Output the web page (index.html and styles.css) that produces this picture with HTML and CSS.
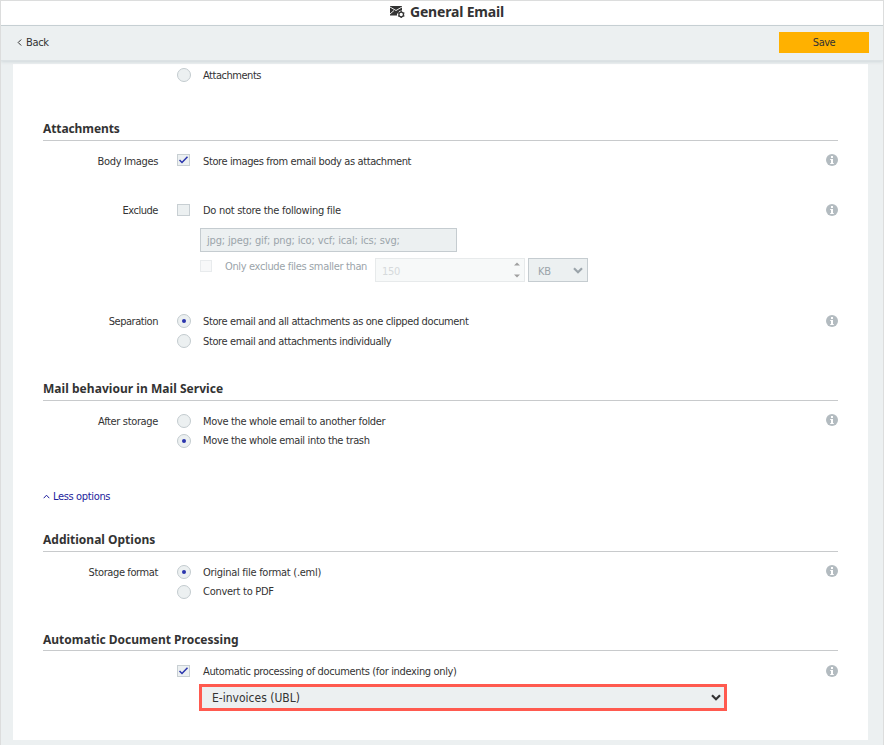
FILE: index.html
```html
<!DOCTYPE html>
<html lang="en">
<head>
<meta charset="utf-8">
<title>General Email</title>
<link rel="stylesheet" href="styles.css">
</head>
<body>
<svg width="0" height="0" class="defs" aria-hidden="true">
  <symbol id="info" viewBox="0 0 12 12"><circle cx="6" cy="6" r="6" fill="#b3bbc0"/><path d="M5 2h2v2H5zM4.200 5H7v4h.8v1H4.200V9H5V6h-.8z" fill="#fff"/></symbol>
  <symbol id="down" viewBox="0 0 10 7"><path d="M1 1.200l4 4 4-4" fill="none" stroke="currentColor" stroke-width="2.200"/></symbol>
</svg>
<div class="window">
  <header class="title">
    <svg width="16" height="14" viewBox="0 0 16 14"><path d="M0 0h12v4.600L9.500 5 7 8v1.500H0z" fill="#333"/><path d="M0 1l6 3.500L12 1M0 8l4-3.500" fill="none" stroke="#fff" stroke-width=".9"/><circle cx="11.200" cy="8.500" r="2.300" fill="#fff" stroke="#333" stroke-width="1.300"/><path d="M11.200 5v1M11.200 11v1M8 6.700l1 .6M13.400 9.700l1 .6M8 10.300l1-.6M13.400 7.300l1-.6" stroke="#333" stroke-width="1.300"/></svg>
    <h1>General Email</h1>
  </header>
  <nav class="toolbar">
    <a class="back"><svg width="5" height="7" viewBox="0 0 5 7"><path d="M4.200.5l-3 3 3 3" fill="none" stroke="#333"/></svg><span>Back</span></a>
    <button class="save">Save</button>
  </nav>
  <main class="card">
    <div class="row first"><i class="radio"></i><span class="text t1">Attachments</span></div>

    <h2 class="h-a"><span>Attachments</span></h2>
    <div class="row r-body"><span class="label">Body Images</span><i class="check on"><svg viewBox="0 0 11 10"><path d="M1.500 5l2.500 2.500L9.500 1.700" /></svg></i><span class="text t2">Store images from email body as attachment</span><svg class="info"><use href="#info"/></svg></div>
    <div class="row r-excl"><span class="label">Exclude</span><i class="check"></i><span class="text t3">Do not store the following file</span><svg class="info"><use href="#info"/></svg></div>
    <div class="field types"><span>jpg; jpeg; gif; png; ico; vcf; ical; ics; svg;</span></div>
    <div class="limit">
      <i class="check faded"></i><span class="only">Only exclude files smaller than</span>
      <div class="field number"><span>150</span><svg width="6" height="16" viewBox="0 0 6 16"><path d="M0 3.500L3 .5l3 3zM0 12.500l3 3 3-3z" fill="#a0a0a0"/></svg></div>
      <div class="field unit"><span>KB</span><svg width="10" height="7"><use href="#down"/></svg></div>
    </div>
    <div class="row r-sep"><span class="label">Separation</span><i class="radio on"></i><span class="text t4">Store email and all attachments as one clipped document</span><svg class="info"><use href="#info"/></svg></div>
    <div class="row"><i class="radio"></i><span class="text t5">Store email and attachments individually</span></div>

    <h2 class="h-b"><span>Mail behaviour in Mail Service</span></h2>
    <div class="row r-after"><span class="label">After storage</span><i class="radio"></i><span class="text t6">Move the whole email to another folder</span><svg class="info"><use href="#info"/></svg></div>
    <div class="row tight"><i class="radio on"></i><span class="text t7">Move the whole email into the trash</span></div>

    <a class="less"><svg width="7" height="5" viewBox="0 0 7 5"><path d="M.7 4.200l2.800-3 2.800 3" fill="none" stroke="#1d1d9c"/></svg><span>Less options</span></a>

    <h2 class="h-c"><span>Additional Options</span></h2>
    <div class="row r-format"><span class="label">Storage format</span><i class="radio on"></i><span class="text t8">Original file format (.eml)</span><svg class="info"><use href="#info"/></svg></div>
    <div class="row tight"><i class="radio"></i><span class="text t9">Convert to PDF</span></div>

    <h2 class="h-d"><span>Automatic Document Processing</span></h2>
    <div class="row r-auto"><i class="check on"><svg viewBox="0 0 11 10"><path d="M1.500 5l2.500 2.500L9.500 1.700" /></svg></i><span class="text t10">Automatic processing of documents (for indexing only)</span><svg class="info"><use href="#info"/></svg></div>
    <div class="select"><span>E-invoices (UBL)</span><svg width="10" height="7"><use href="#down"/></svg></div>
  </main>
</div>
</body>
</html>
```
FILE: styles.css
```css
* { box-sizing: border-box; }
body { margin: 0; background: #ecf0f1; color: #333; font-family: "DejaVu Sans Condensed", "DejaVu Sans", sans-serif; font-stretch: condensed; font-size: 11px; line-height: 14px; letter-spacing: -.35px; }
.defs { position: absolute; }
.window { height: 745px; overflow: hidden; border: 1px solid #dcdddd; border-bottom: 0; }
.title { display: flex; justify-content: center; height: 25px; background: #fff; border-bottom: 1px solid #c5ced2; padding: 2px 0 0 10px; gap: 4px; }
.title svg { margin-top: 3px; }
h1 { margin: 0; font: bold 14px/17px "Noto Sans", sans-serif; letter-spacing: -.18px; }
.toolbar { display: flex; justify-content: space-between; height: 35px; padding: 6px 14px 0 16px; border-bottom: 1px solid #dce2e4; box-shadow: 0 1px 3px #cfd7da; position: relative; }
.back { display: flex; align-items: center; height: 21px; gap: 4px; }
.save { width: 90px; height: 21px; padding: 0; border: 0; background: #ffb100; color: #333; font: inherit; letter-spacing: -.5px; }
.card { width: 855px; height: 676px; margin: 3px 0 0 12px; padding: 1px 30px 0; background: #fff; }
.row { display: grid; grid-template-columns: 115px 14px 1fr 12px; column-gap: 19px; align-items: center; height: 20px; }
.row.tight { height: 19px; }
.label { grid-column: 1; text-align: right; padding-top: 2px; }
.row .radio, .row .check { grid-column: 2; }
.text { grid-column: 3; margin-left: -7px; padding-top: 2px; white-space: nowrap; }
.tight .text { padding-top: 0; }
.r-body .label, .r-body .text { padding-top: 3px; }
.info { grid-column: 4; width: 12px; height: 12px; }
.r-after .info, .r-format .info { margin-bottom: 2px; }
.t1 { letter-spacing: -.47px; }
.t2, .t4, .t5 { letter-spacing: -.39px; }
.t3, .t8, .t9 { letter-spacing: -.28px; }
.r-excl .label, .r-sep .label { letter-spacing: -.45px; }
.r-format .label { letter-spacing: -.39px; }
.radio { display: grid; place-items: center; width: 14px; height: 14px; border: 1px solid #c3cbcf; border-radius: 50%; background: #ecf0f1; }
.radio.on::after { content: ""; width: 4px; height: 4px; border-radius: 50%; background: #2b35ad; }
.check { display: block; width: 13px; height: 12px; border: 1px solid #c8cfd3; background: #ecf0f1; }
.check svg { display: block; width: 11px; height: 10px; fill: none; stroke: #2b35ad; stroke-width: 1.500; }
.check.faded { opacity: .4; }
h2 { margin: 0; height: 20px; border-bottom: 1px solid #c8cacc; font: bold 12px/15px "Noto Sans", sans-serif; letter-spacing: 0; }
.h-a { margin-top: 36px; letter-spacing: -.1px; }
.r-body { margin-top: 9px; }
.r-excl { margin-top: 30px; }
.field { display: flex; align-items: center; height: 24px; border: 1px solid #c5ccd0; background: #ecf0f1; color: #9ba4aa; }
.field span { padding-top: 2px; }
.types { width: 257px; margin: 8px 0 0 157px; padding-left: 6px; letter-spacing: -.155px; }
.limit { display: flex; margin: 6px 0 0 157px; height: 24px; }
.limit .check { width: 12px; margin-top: 2px; }
.only { width: 150px; margin: 2px 0 0 13px; white-space: nowrap; color: #9ba4aa; }
.number { width: 150px; justify-content: space-between; padding: 0 4px 0 6px; background: #f7f9f9; border-color: #e7eaeb; color: #d6dadc; }
.limit .field span { padding-top: 4px; }
.unit { width: 60px; margin-left: 3px; justify-content: space-between; padding: 0 4px 0 9px; }
.r-sep { margin-top: 29px; }
.h-b { margin-top: 30px; letter-spacing: .04px; }
.r-after { margin-top: 10px; }
.less { display: flex; align-items: center; gap: 3px; height: 20px; margin-top: 36px; color: #1d1d9c; }
.less span { padding-top: 2px; }
.h-c { margin-top: 26px; }
.r-format { margin-top: 10px; }
.h-d { margin-top: 30px; line-height: 17px; }
.r-auto { margin-top: 10px; }
.select { display: flex; align-items: center; justify-content: space-between; width: 528px; height: 27px; margin: 3px 0 0 156px; padding: 0 3px 0 10px; border: 3px solid #ff5a4f; background: #ecf0f1; font-size: 12px; letter-spacing: 0; }
```
